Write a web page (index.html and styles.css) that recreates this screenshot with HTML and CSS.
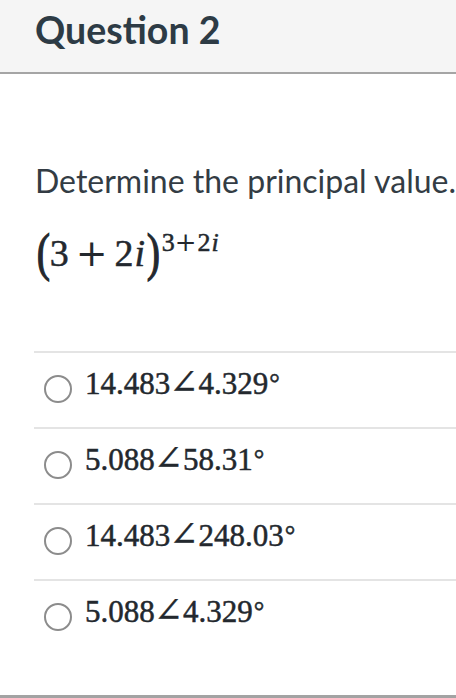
FILE: index.html
```html
<!DOCTYPE html>
<html>
<head>
<meta charset="utf-8">
<link rel="stylesheet" href="styles.css">
</head>
<body>
<div class="page">
  <header class="qhead">
    <h2 class="qtitle">Question 2</h2>
  </header>
  <div class="qbody">
    <p class="qtext">Determine the principal value.</p>
    <div class="math expr"><span class="paren">(</span><span class="num">3</span><span class="op">+</span><span class="num">2</span><span class="mi">i</span><span class="paren">)</span><sup class="sup"><span class="num">3</span><span class="op-s">+</span><span class="num">2</span><span class="mi">i</span></sup></div>
    <ul class="answers">
      <li class="answer"><span class="radio"></span><span class="math ans">14.483<span class="ang">∠</span>4.329<span class="deg">°</span></span></li>
      <li class="answer"><span class="radio"></span><span class="math ans">5.088<span class="ang">∠</span>58.31<span class="deg">°</span></span></li>
      <li class="answer"><span class="radio"></span><span class="math ans">14.483<span class="ang">∠</span>248.03<span class="deg">°</span></span></li>
      <li class="answer"><span class="radio"></span><span class="math ans">5.088<span class="ang">∠</span>4.329<span class="deg">°</span></span></li>
    </ul>
  </div>
</div>
</body>
</html>
```
FILE: styles.css
```css
html, body {
  margin: 0;
  padding: 0;
  background: #ffffff;
}
.page {
  width: 456px;
  height: 698px;
  box-sizing: border-box;
  border-bottom: 3px solid #a3a3a3;
  overflow: hidden;
  font-family: Lato, "Noto Sans", sans-serif;
  color: #2d3b45;
}
.qhead {
  height: 61px;
  padding: 11px 0 0 35px;
  background: #f5f5f5;
  border-bottom: 2px solid #a5a5a5;
}
.qtitle {
  margin: 0;
  font-size: 37.5px;
  font-weight: 700;
  line-height: 37px;
  color: #2d3b45;
}
.qbody {
  padding-left: 35px;
}
.qtext {
  margin: 87px 0 0 0;
  font-size: 32px;
  line-height: 40px;
  white-space: nowrap;
  color: #333c44;
}
.math {
  font-family: "Liberation Serif", "DejaVu Serif", serif;
  color: #23282e;
  -webkit-text-stroke: 0.5px #23282e;
}
.expr {
  margin-top: 27px;
  height: 50px;
  font-size: 38px;
  line-height: 50px;
  white-space: nowrap;
}
.paren {
  display: inline-block;
  transform: scale(1.05, 1.38);
  transform-origin: 50% 55%;
  -webkit-text-stroke: 0.9px #23282e;
}
.paren:first-child {
  margin-left: 2px;
}
.op {
  font-family: "DejaVu Serif", serif;
  -webkit-text-stroke: 0;
  font-weight: 300;
  margin: 0 7px 0 7px;
}
.mi {
  font-style: italic;
  margin: 0 2px 0 1px;
}
.sup {
  font-size: 26px;
  line-height: 0;
  position: relative;
  top: -15px;
  vertical-align: baseline;
  margin-left: 2px;
}
.sup .mi {
  margin: 0 0 0 1px;
}
.op-s {
  font-family: "DejaVu Serif", serif;
  -webkit-text-stroke: 0;
  margin: 0 1px 0 0;
}
.answers {
  list-style: none;
  margin: 73px 0 0 -1px;
  padding: 0;
}
.answer {
  height: 76px;
  box-sizing: border-box;
  border-top: 2px solid #e4e4e4;
  display: flex;
  align-items: center;
  gap: 13px;
  padding-left: 10px;
}
.radio {
  width: 24px;
  height: 24px;
  border: 2px solid #8c8c8c;
  border-radius: 50%;
  flex: none;
  margin-top: -2px;
}
.ans {
  font-size: 31px;
  line-height: 38px;
  margin-bottom: 10px;
  white-space: nowrap;
}
.ang {
  font-family: "DejaVu Serif", serif;
  -webkit-text-stroke: 0.3px #23282e;
  font-size: 35px;
  line-height: 0;
  margin: 0 0 0 -1px;
}
.deg {
  margin-left: 1px;
  font-size: 0.85em;
  position: relative;
  top: -2px;
}
```
